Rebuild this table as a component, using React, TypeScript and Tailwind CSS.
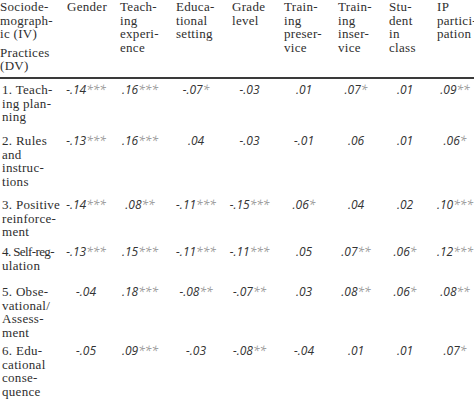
const grid = 'grid grid-cols-[67px_53px_56px_56px_52px_54px_51px_48px_80px]';

// width of the box each value is centred in, per value column
const boxes = ['w-[38px]', 'w-[40px]', 'w-[40px]', 'w-[35px]', 'w-[40px]', 'w-[36px]', 'w-[32px]', 'w-[36px]'];

const headers = [
  ['Gender'],
  ['Teach-', 'ing', 'experi-', 'ence'],
  ['Educa-', 'tional', 'setting'],
  ['Grade', 'level'],
  ['Train-', 'ing', 'preser-', 'vice'],
  ['Train-', 'ing', 'inser-', 'vice'],
  ['Stu-', 'dent', 'in', 'class'],
  ['IP', 'partici-', 'pation'],
];

const rows = [
  { h: 'h-[51px]', label: ['1. Teach-', 'ing plan-', 'ning'], vals: ['-.14***', '.16***', '-.07*', '-.03', '.01', '.07*', '.01', '.09**'] },
  { h: 'h-[64px]', label: ['2. Rules', 'and', 'instruc-', 'tions'], vals: ['-.13***', '.16***', '.04', '-.03', '-.01', '.06', '.01', '.06*'] },
  { h: 'h-[47px]', label: ['3. Positive', 'reinforce-', 'ment'], vals: ['-.14***', '.08**', '-.11***', '-.15***', '.06*', '.04', '.02', '.10***'] },
  { h: 'h-[40px]', label: ['4. Self-reg-', 'ulation'], vals: ['-.13***', '.15***', '-.11***', '-.11***', '.05', '.07**', '.06*', '.12***'] },
  { h: 'h-[59px]', label: ['5. Obse-', 'vational/', 'Assess-', 'ment'], vals: ['-.04', '.18***', '-.08**', '-.07**', '.03', '.08**', '.06*', '.08**'] },
  { h: 'h-[60px]', label: ['6. Edu-', 'cational', 'conse-', 'quence'], vals: ['-.05', '.09***', '-.03', '-.08**', '-.04', '.01', '.01', '.07*'] },
];

function Lines({ lines }: { lines: string[] }) {
  return (
    <div className="flex flex-col">
      {lines.map((l, i) => (
        <span key={i} className={`whitespace-nowrap ${l.length > 11 ? 'tracking-[-0.6px]' : ''}`}>{l}</span>
      ))}
    </div>
  );
}

function Value({ v, box }: { v: string; box: string }) {
  const i = v.indexOf('*');
  const num = i < 0 ? v : v.slice(0, i);
  const stars = i < 0 ? '' : v.slice(i);
  return (
    <div className={`${box} flex justify-center`}>
      <span className="whitespace-nowrap font-['Open_Sans',sans-serif] italic text-[12px] leading-[13.5px] tracking-normal">
        <span className="text-[#333]">{num}</span>
        <span className="text-[#9a9a9a]">{stars}</span>
      </span>
    </div>
  );
}

export default function App() {
  return (
    <div className="w-[474px] h-[400px] overflow-hidden bg-white text-[#2e2e2e] font-['Liberation_Serif',serif] text-[13px] leading-[13.5px] tracking-[0.3px]">
      <div className={`${grid} h-[76px]`}>
        <div className="flex flex-col gap-[5px]">
          <Lines lines={['Sociode-', 'mograph-', 'ic (IV)']} />
          <Lines lines={['Practices', '(DV)']} />
        </div>
        {headers.map((h, i) => (
          <Lines key={i} lines={h} />
        ))}
      </div>
      <div className="h-[2px] bg-[#3a3a3a] mt-[1px]" />
      <div className="pt-[4px]">
        {rows.map((r, ri) => (
          <div key={ri} className={`${grid} ${r.h}`}>
            <div className="indent-[2px]">
              <Lines lines={r.label} />
            </div>
            {r.vals.map((v, vi) => (
              <Value key={vi} v={v} box={boxes[vi]} />
            ))}
          </div>
        ))}
      </div>
    </div>
  );
}
